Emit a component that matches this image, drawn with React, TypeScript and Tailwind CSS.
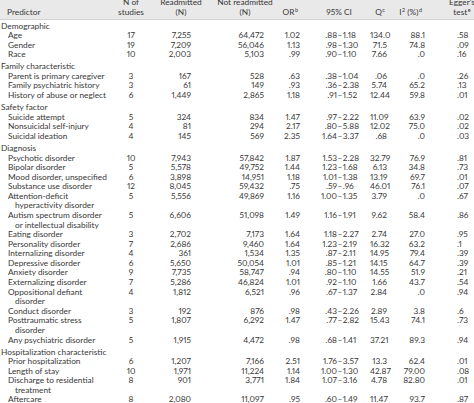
type Item = {
  label: string[];
  n: string;
  re: string;
  not: string;
  or: string;
  ci: [string, string];
  q: string;
  i2: string;
  egger: string;
};

type Group = { title: string; items: Item[] };

const it = (
  label: string | string[],
  n: string,
  re: string,
  not: string,
  or: string,
  ci: string,
  q: string,
  i2: string,
  egger: string
): Item => {
  const [lo, hi] = ci.split("–");
  return {
    label: Array.isArray(label) ? label : [label],
    n,
    re,
    not,
    or,
    ci: [lo, hi],
    q,
    i2,
    egger,
  };
};

const groups: Group[] = [
  {
    title: "Demographic",
    items: [
      it("Age", "17", "7,255", "64,472", "1.02", ".88–1.18", "134.0", "88.1", ".58"),
      it("Gender", "19", "7,209", "56,046", "1.13", ".98–1.30", "71.5", "74.8", ".09"),
      it("Race", "10", "2,003", "5,103", ".99", ".90–1.10", "7.66", ".0", ".16"),
    ],
  },
  {
    title: "Family characteristic",
    items: [
      it("Parent is primary caregiver", "3", "167", "528", ".63", ".38–1.04", ".06", ".0", ".26"),
      it("Family psychiatric history", "3", "61", "149", ".93", ".36–2.38", "5.74", "65.2", ".13"),
      it("History of abuse or neglect", "6", "1,449", "2,865", "1.18", ".91–1.52", "12.44", "59.8", ".01"),
    ],
  },
  {
    title: "Safety factor",
    items: [
      it("Suicide attempt", "5", "324", "834", "1.47", ".97–2.22", "11.09", "63.9", ".02"),
      it("Nonsuicidal self-injury", "4", "81", "294", "2.17", ".80–5.88", "12.02", "75.0", ".02"),
      it("Suicidal ideation", "4", "145", "569", "2.35", "1.64–3.37", ".68", ".0", ".03"),
    ],
  },
  {
    title: "Diagnosis",
    items: [
      it("Psychotic disorder", "10", "7,943", "57,842", "1.87", "1.53–2.28", "32.79", "76.9", ".81"),
      it("Bipolar disorder", "5", "5,578", "49,752", "1.44", "1.23–1.68", "6.13", "34.8", ".73"),
      it("Mood disorder, unspecified", "6", "3,898", "14,951", "1.18", "1.01–1.38", "13.19", "69.7", ".01"),
      it("Substance use disorder", "12", "8,045", "59,432", ".75", ".59–.96", "46.01", "76.1", ".07"),
      it(["Attention-deficit", "hyperactivity disorder"], "5", "5,556", "49,869", "1.16", "1.00–1.35", "3.79", ".0", ".67"),
      it(["Autism spectrum disorder", "or intellectual disability"], "5", "6,606", "51,098", "1.49", "1.16–1.91", "9.62", "58.4", ".86"),
      it("Eating disorder", "3", "2,702", "7,173", "1.64", "1.18–2.27", "2.74", "27.0", ".95"),
      it("Personality disorder", "7", "2,686", "9,460", "1.64", "1.23–2.19", "16.32", "63.2", ".1"),
      it("Internalizing disorder", "4", "361", "1,534", "1.35", ".87–2.11", "14.95", "79.4", ".39"),
      it("Depressive disorder", "6", "5,650", "50,054", "1.01", ".85–1.21", "14.15", "64.7", ".39"),
      it("Anxiety disorder", "9", "7,735", "58,747", ".94", ".80–1.10", "14.55", "51.9", ".21"),
      it("Externalizing disorder", "7", "5,286", "46,824", "1.01", ".92–1.10", "1.66", "43.7", ".54"),
      it(["Oppositional defiant", "disorder"], "4", "1,812", "6,521", ".96", ".67–1.37", "2.84", ".0", ".94"),
      it("Conduct disorder", "3", "192", "876", ".98", ".43–2.26", "2.89", "3.8", ".6"),
      it(["Posttraumatic stress", "disorder"], "5", "1,807", "6,292", "1.47", ".77–2.82", "15.43", "74.1", ".73"),
      it("Any psychiatric disorder", "5", "1,915", "4,472", ".98", ".68–1.41", "37.21", "89.3", ".94"),
    ],
  },
  {
    title: "Hospitalization characteristic",
    items: [
      it("Prior hospitalization", "6", "1,207", "7,166", "2.51", "1.76–3.57", "13.3", "62.4", ".01"),
      it("Length of stay", "10", "1,971", "11,224", "1.14", "1.00–1.30", "42.87", "79.00", ".08"),
      it(["Discharge to residential", "treatment"], "8", "901", "3,771", "1.84", "1.07–3.16", "4.78", "82.80", ".01"),
      it("Aftercare", "8", "2,080", "11,097", ".95", ".60–1.49", "11.47", "93.7", ".87"),
    ],
  },
];

const Sup = ({ children }: { children: string }) => (
  <sup className="text-[5.5px] ml-[0.5px]">{children}</sup>
);

function HeaderRow() {
  return (
    <div className="-mt-[3px] flex items-end bg-[#e9e9e9] pb-[2px] leading-[10px] border-b border-[#d4d4d4]">
      <div className="w-[112px] shrink-0 pl-[7px]">Predictor</div>
      <div className="w-[38px] shrink-0 text-center">
        N of
        <br />
        studies
      </div>
      <div className="w-[62px] shrink-0 text-center">
        Readmitted
        <br />
        (N)
      </div>
      <div className="w-[66px] shrink-0 text-center">
        Not readmitted
        <br />
        (N)
      </div>
      <div className="w-[30px] shrink-0 text-right pr-[10px]">
        OR<Sup>b</Sup>
      </div>
      <div className="w-[62px] shrink-0 text-center">95% CI</div>
      <div className="w-[25px] shrink-0 text-right pr-[10px]">
        Q<Sup>c</Sup>
      </div>
      <div className="w-[45px] shrink-0 text-right pr-[18px] whitespace-nowrap">
        I<Sup>2</Sup> (%)<Sup>d</Sup>
      </div>
      <div className="w-[50px] shrink-0 text-center pr-[6px] whitespace-nowrap">
        Egger's
        <br />
        test<Sup>e</Sup>
      </div>
    </div>
  );
}

function DataRow({ item }: { item: Item }) {
  return (
    <div className="flex items-start">
      <div className="w-[112px] shrink-0 pl-[8px] whitespace-nowrap">
        {item.label.map((line, i) => (
          <div key={line} className={i > 0 ? "pl-[7px]" : ""}>
            {line}
          </div>
        ))}
      </div>
      <div className="w-[38px] shrink-0 text-center">{item.n}</div>
      <div className="w-[62px] shrink-0 text-right pr-[21px]">{item.re}</div>
      <div className="w-[66px] shrink-0 text-right pr-[14px]">{item.not}</div>
      <div className="w-[30px] shrink-0 text-right pr-[8px]">{item.or}</div>
      <div className="w-[62px] shrink-0 flex">
        <span className="w-[29px] text-right">{item.ci[0]}</span>
        <span className="px-[0.5px]">–</span>
        <span>{item.ci[1]}</span>
      </div>
      <div className="w-[25px] shrink-0 text-right pr-[8px]">{item.q}</div>
      <div className="w-[45px] shrink-0 text-right pr-[15px]">{item.i2}</div>
      <div className="w-[50px] shrink-0 pl-[17px]">{item.egger}</div>
    </div>
  );
}

export default function App() {
  return (
    <div className="w-[474px] h-[403px] overflow-hidden bg-white font-['Lato',sans-serif] text-[8.3px] leading-[9.58px] text-[#383838] proportional-nums">
      <div className="w-[490px]">
        <HeaderRow />
        {groups.map((g, gi) => (
          <div key={g.title} className={gi === 0 ? "pt-[1.5px]" : "pt-[2.5px]"}>
            <div className="pl-[1px]">{g.title}</div>
            {g.items.map((item) => (
              <DataRow key={item.label[0]} item={item} />
            ))}
          </div>
        ))}
      </div>
    </div>
  );
}
